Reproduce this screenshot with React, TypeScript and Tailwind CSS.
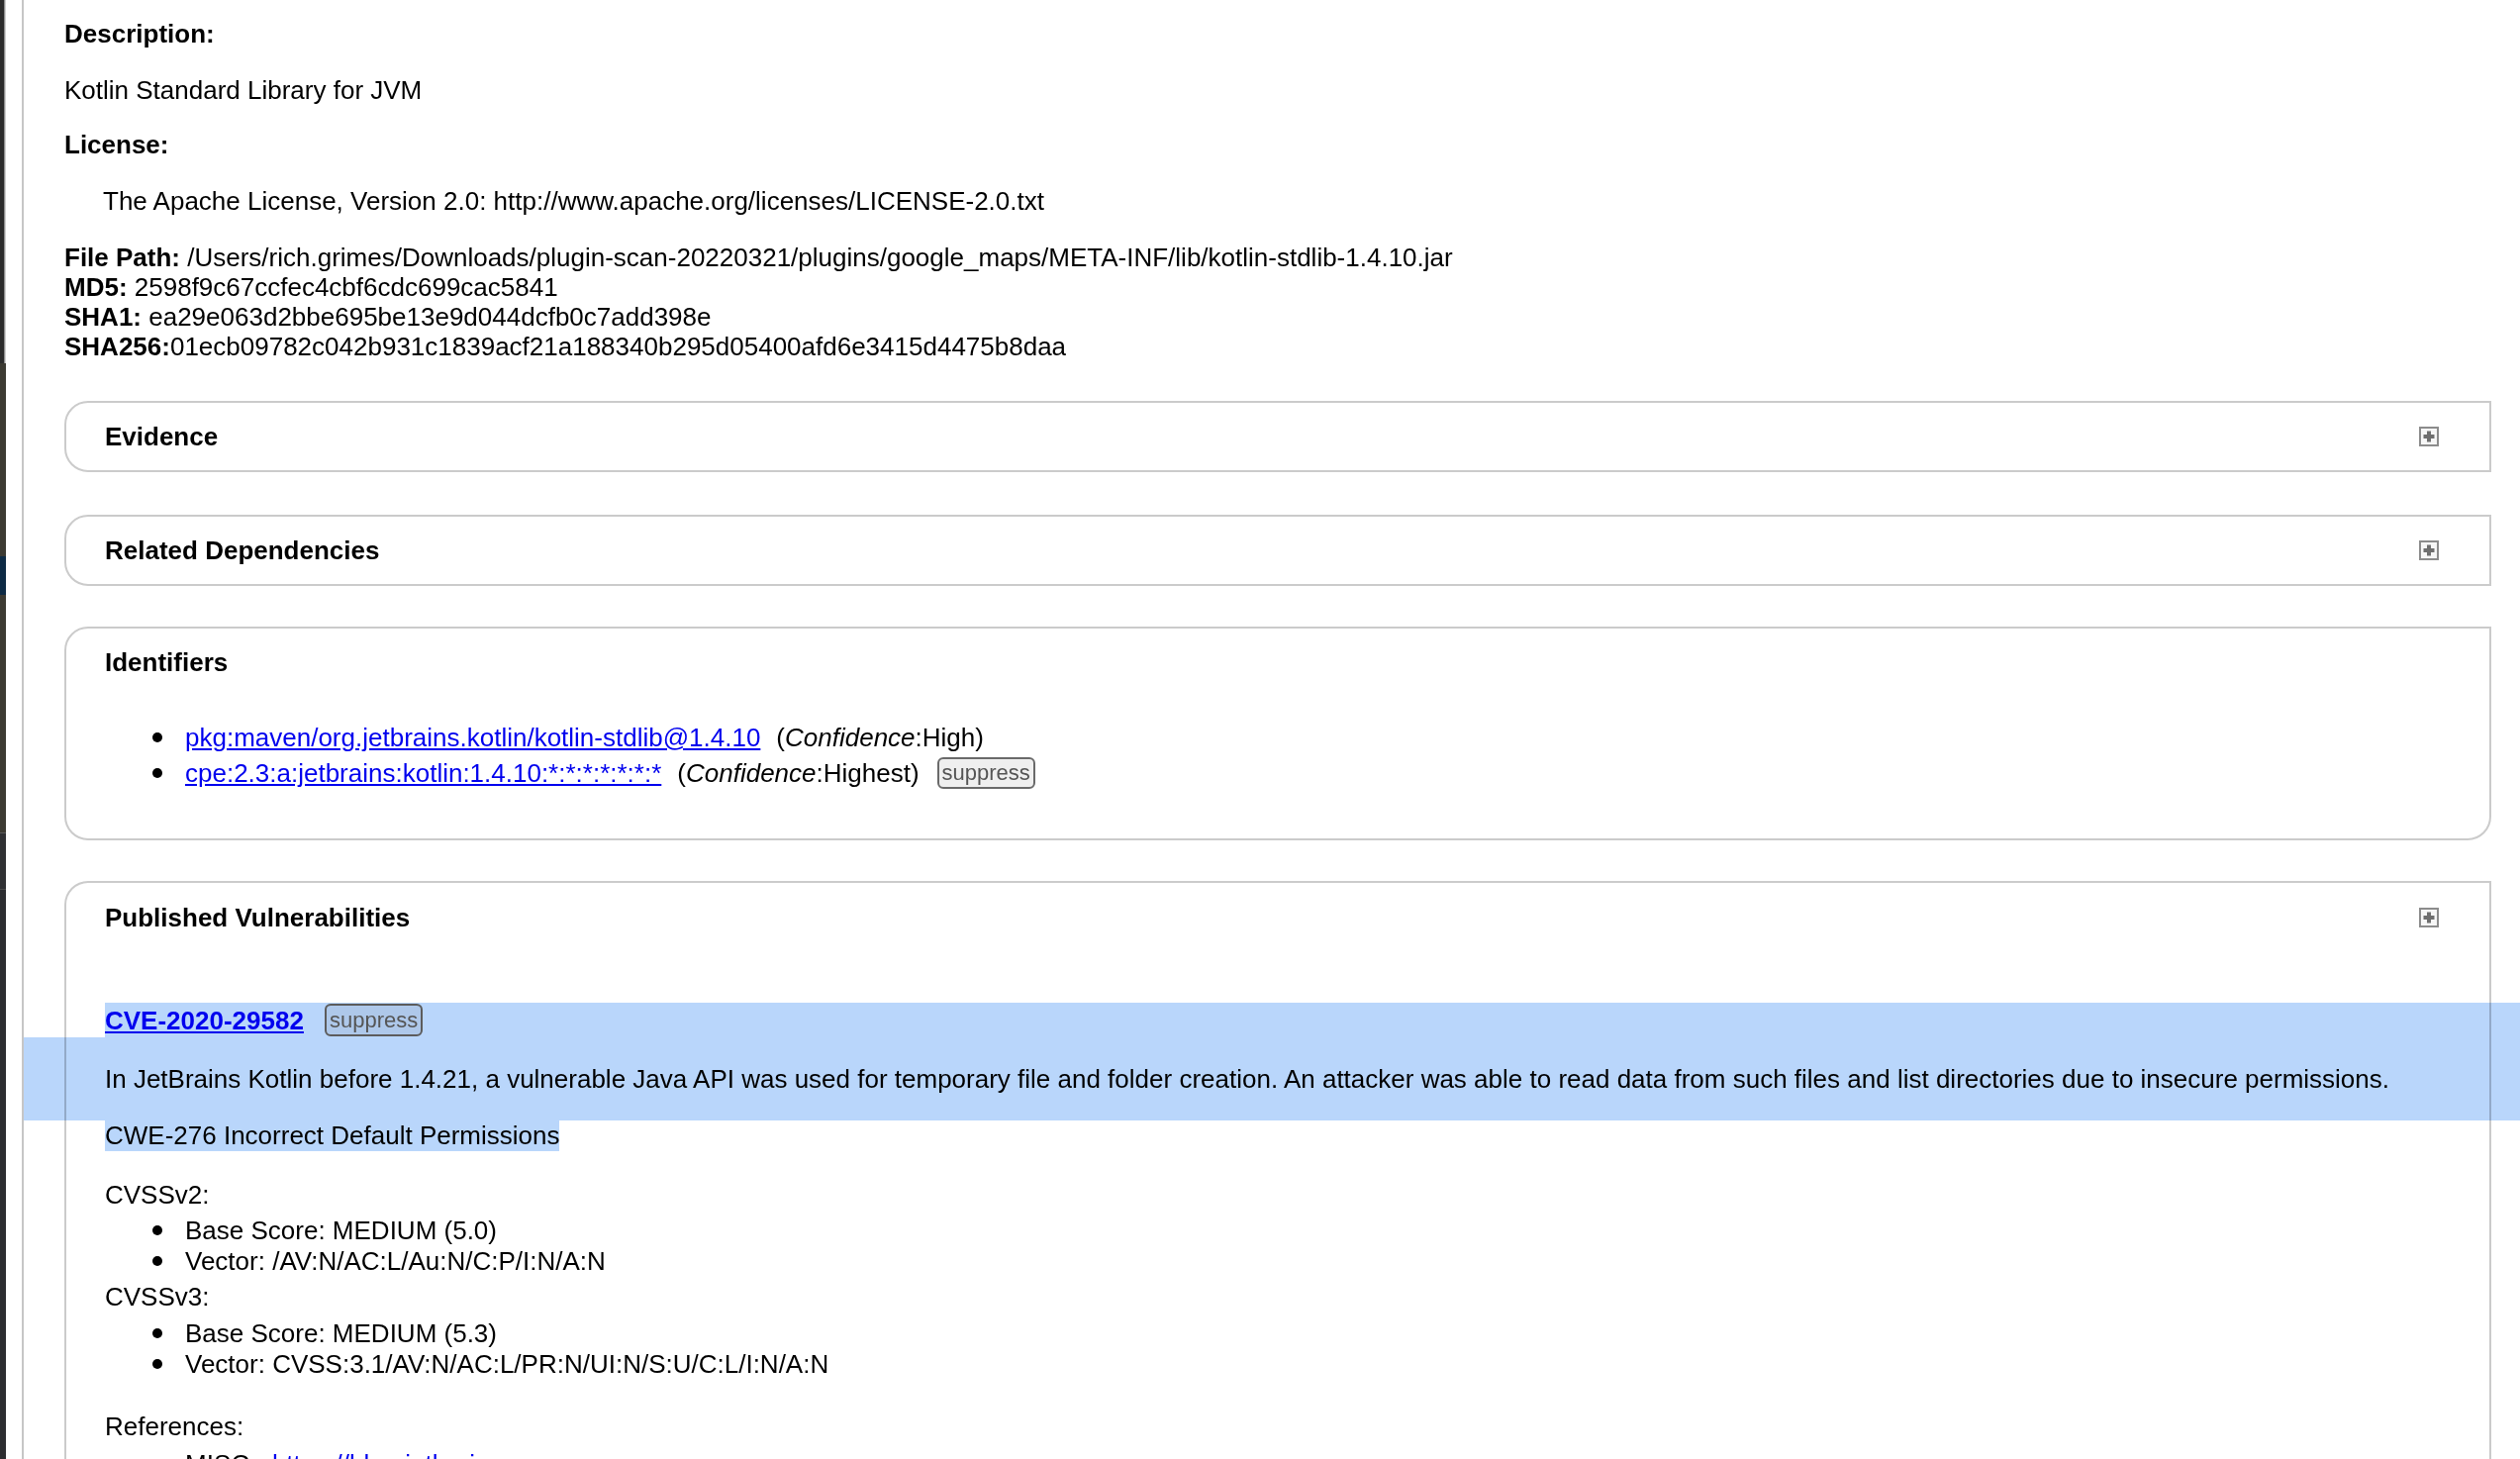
import React from "react";

function PlusIcon() {
  return (
    <svg width="20" height="20" viewBox="0 0 20 20" className="shrink-0">
      <rect x="1" y="1" width="18" height="18" fill="#f6f6f6" stroke="#8c8c8c" strokeWidth="2" />
      <rect x="4.5" y="8" width="11" height="4" fill="#6e6e6e" />
      <rect x="8" y="4.5" width="4" height="11" fill="#6e6e6e" />
    </svg>
  );
}

function Suppress({ selected }: { selected?: boolean }) {
  return (
    <span
      className={
        selected
          ? "inline-flex h-[33px] items-center rounded-[6px] border-2 border-[#5c5c5c] bg-[#aec8ea] px-[3px] text-[22px] leading-none text-[#555]"
          : "inline-flex h-[32px] items-center rounded-[6px] border-2 border-[#6a6a6a] bg-[#efefef] px-[3px] text-[22px] leading-none text-[#555]"
      }
    >
      suppress
    </span>
  );
}

function Bullet() {
  return <span className="ml-[48px] mr-[23px] h-[10px] w-[10px] shrink-0 rounded-full bg-black" />;
}

function LeftStrip() {
  return (
    <div className="flex w-[6px] shrink-0 flex-col">
      <div className="flex h-[367px]">
        <div className="w-[4px] bg-[#2c2c2c]" />
        <div className="w-[1px] bg-[#8e8e8e]" />
        <div className="w-[1px] bg-[#cfcfcf]" />
      </div>
      <div className="h-[195px] bg-[#3c3a32]" />
      <div className="h-[39px] bg-[#0d2a44]" />
      <div className="h-[240px] bg-[#3c3a32]" />
      <div className="h-[57px] border-t border-[#5a5a5a] bg-[#2f3033]" />
      <div className="flex-1 border-t border-[#4a4a4a] bg-[#2c2d30]" />
    </div>
  );
}

function CollapsedPanel({ title }: { title: string }) {
  return (
    <div className="flex h-[72px] items-center justify-between rounded-l-[24px] border-2 border-[#cbcbcb] pl-[39px] pr-[51px] font-bold">
      <span>{title}</span>
      <PlusIcon />
    </div>
  );
}

export default function App() {
  return (
    <div className="flex h-[1474px] w-[2546px] overflow-hidden bg-white font-['Liberation_Sans',Arial,sans-serif] text-[26px] leading-[30px] text-black">
      <LeftStrip />
      <div className="w-[16px] shrink-0" />
      <div className="min-w-0 flex-1 border-l-2 border-[#c6c6c6] pl-[41px] pr-[29px] pt-[19px]">
        <div className="font-bold">Description:</div>
        <div className="mt-[27px]">Kotlin Standard Library for JVM</div>
        <div className="mt-[25px] font-bold">License:</div>
        <div className="mt-[27px] pl-[39px]">
          The Apache License, Version 2.0: http://www.apache.org/licenses/LICENSE-2.0.txt
        </div>
        <div className="mt-[27px]">
          <div>
            <b>File Path:</b> /Users/rich.grimes/Downloads/plugin-scan-20220321/plugins/google_maps/META-INF/lib/kotlin-stdlib-1.4.10.jar
          </div>
          <div>
            <b>MD5:</b> 2598f9c67ccfec4cbf6cdc699cac5841
          </div>
          <div>
            <b>SHA1:</b> ea29e063d2bbe695be13e9d044dcfb0c7add398e
          </div>
          <div>
            <b>SHA256:</b>01ecb09782c042b931c1839acf21a188340b295d05400afd6e3415d4475b8daa
          </div>
        </div>

        <div className="mt-[40px]">
          <CollapsedPanel title="Evidence" />
        </div>
        <div className="mt-[43px]">
          <CollapsedPanel title="Related Dependencies" />
        </div>

        <div className="mt-[41px] rounded-tl-[24px] rounded-bl-[24px] rounded-br-[24px] border-2 border-[#cbcbcb] pb-[48px] pl-[39px] pr-[51px] pt-[19px]">
          <div className="font-bold">Identifiers</div>
          <ul className="mt-[46px]">
            <li className="flex h-[30px] items-center">
              <Bullet />
              <a className="text-[#0000ee] underline" href="#">
                pkg:maven/org.jetbrains.kotlin/kotlin-stdlib@1.4.10
              </a>
              <span className="ml-[16px]">
                (<i>Confidence</i>:High)
              </span>
            </li>
            <li className="mt-[3px] flex h-[36px] items-center">
              <Bullet />
              <a className="text-[#0000ee] underline" href="#">
                cpe:2.3:a:jetbrains:kotlin:1.4.10:*:*:*:*:*:*:*
              </a>
              <span className="ml-[16px]">
                (<i>Confidence</i>:Highest)
              </span>
              <span className="ml-[18px] flex">
                <Suppress />
              </span>
            </li>
          </ul>
        </div>

        <div className="mt-[41px] rounded-tl-[24px] border-2 border-b-0 border-[#cbcbcb] pb-[200px] pl-[39px] pr-[51px] pt-[20px]">
          <div className="flex h-[30px] items-center justify-between font-bold">
            <span>Published Vulnerabilities</span>
            <PlusIcon />
          </div>
          <div className="mr-[-82px] mt-[71px] flex h-[35px] items-center bg-[#b9d6fb] mix-blend-multiply">
            <a className="font-bold text-[#0000ee] underline" href="#">
              CVE-2020-29582
            </a>
            <span className="ml-[21px] flex">
              <Suppress selected />
            </span>
          </div>
          <div className="ml-[-82px] mr-[-82px] h-[84px] bg-[#b9d6fb] pl-[82px] pt-[27px] mix-blend-multiply">
            In JetBrains Kotlin before 1.4.21, a vulnerable Java API was used for temporary file and folder creation. An attacker was able to read data from such files and list directories due to insecure permissions.
          </div>
          <div className="h-[31px]">
            <span className="inline-block h-[31px] bg-[#b9d6fb] leading-[31px]">
              CWE-276 Incorrect Default Permissions
            </span>
          </div>
          <div className="mt-[29px]">CVSSv2:</div>
          <ul className="mt-[5px]">
            <li className="flex h-[31px] items-center">
              <Bullet />
              <span>Base Score: MEDIUM (5.0)</span>
            </li>
            <li className="flex h-[31px] items-center">
              <Bullet />
              <span>Vector: /AV:N/AC:L/Au:N/C:P/I:N/A:N</span>
            </li>
          </ul>
          <div className="mt-[6px]">CVSSv3:</div>
          <ul className="mt-[6px]">
            <li className="flex h-[31px] items-center">
              <Bullet />
              <span>Base Score: MEDIUM (5.3)</span>
            </li>
            <li className="flex h-[31px] items-center">
              <Bullet />
              <span>Vector: CVSS:3.1/AV:N/AC:L/PR:N/UI:N/S:U/C:L/I:N/A:N</span>
            </li>
          </ul>
          <div className="mt-[33px]">References:</div>
          <ul className="mt-[7px]">
            <li className="flex h-[31px] items-center">
              <Bullet />
              <span>MISC - </span>
              <a className="ml-[7px] text-[#0000ee] underline" href="#">
                https://blog.jetbrains.com
              </a>
            </li>
          </ul>
        </div>
      </div>
    </div>
  );
}
